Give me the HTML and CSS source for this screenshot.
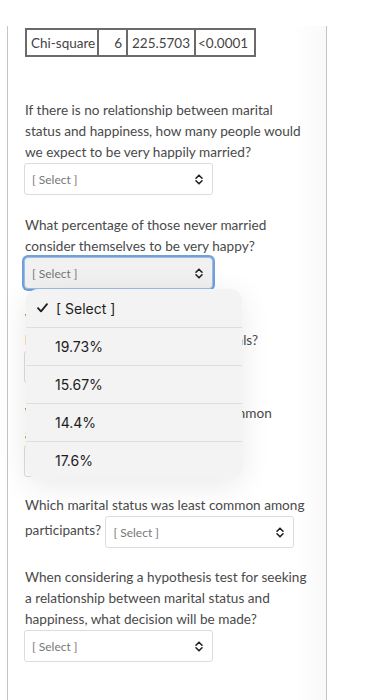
FILE: index.html
```html
<!DOCTYPE html>
<html lang="en">
<head>
    <meta charset="UTF-8">
    <meta name="viewport" content="width=device-width, initial-scale=1.0">
    <title>Chi-square quiz</title>
    <link rel="stylesheet" href="styles.css">
</head>
<body>

<div class="card">
    <!-- Resultado de la prueba -->
    <table class="stats">
        <tr>
            <td class="c-name">Chi-square</td>
            <td class="c-df num">6</td>
            <td class="c-val num">225.5703</td>
            <td class="c-p">&lt;0.0001</td>
        </tr>
    </table>

    <div class="question first">
        <p>If there is no relationship between marital status and happiness, how many people would we expect to be very happily married?</p>
        <div class="select"><span>[ Select ]</span><svg class="chev" width="8" height="11" viewBox="0 0 8 11"><polyline points="1,4.2 4,1.2 7,4.2"/><polyline points="1,6.8 4,9.8 7,6.8"/></svg></div>
    </div>

    <div class="question">
        <p>What percentage of those never married consider themselves to be very happy?</p>
        <div class="select-wrap">
            <div class="select focused"><span>[ Select ]</span><svg class="chev" width="8" height="11" viewBox="0 0 8 11"><polyline points="1,4.2 4,1.2 7,4.2"/><polyline points="1,6.8 4,9.8 7,6.8"/></svg></div>

            <!-- Lista abierta -->
            <ul class="menu">
                <li class="picked"><svg class="check" width="11" height="10" viewBox="0 0 11 10"><polyline points="1,5.2 4,8.4 10,1.2"/></svg>[ Select ]</li>
                <li>19.73%</li>
                <li>15.67%</li>
                <li>14.4%</li>
                <li>17.6%</li>
            </ul>
        </div>
    </div>

    <div class="question">
        <p>What is the expected count of those<br>happy among the widowed individuals?</p>
        <div class="select"><span>[ Select ]</span><svg class="chev" width="8" height="11" viewBox="0 0 8 11"><polyline points="1,4.2 4,1.2 7,4.2"/><polyline points="1,6.8 4,9.8 7,6.8"/></svg></div>
    </div>

    <div class="question">
        <p>Which marital status is the most common<br>among the very happy?</p>
        <div class="select"><span>[ Select ]</span><svg class="chev" width="8" height="11" viewBox="0 0 8 11"><polyline points="1,4.2 4,1.2 7,4.2"/><polyline points="1,6.8 4,9.8 7,6.8"/></svg></div>
    </div>

    <div class="question tight">
        <p>Which marital status was least common among participants? <span class="select inline"><span>[ Select ]</span><svg class="chev" width="8" height="11" viewBox="0 0 8 11"><polyline points="1,4.2 4,1.2 7,4.2"/><polyline points="1,6.8 4,9.8 7,6.8"/></svg></span></p>
    </div>

    <div class="question last">
        <p>When considering a hypothesis test for seeking a relationship between marital status and happiness, what decision will be made?</p>
        <div class="select"><span>[ Select ]</span><svg class="chev" width="8" height="11" viewBox="0 0 8 11"><polyline points="1,4.2 4,1.2 7,4.2"/><polyline points="1,6.8 4,9.8 7,6.8"/></svg></div>
    </div>
</div>

</body>
</html>
```

FILE: styles.css
```css
body, html {
    margin: 0;
    background-color: #fff;
    font-family: Lato, 'Liberation Sans', sans-serif;
}

/* Tarjeta con bordes laterales */
.card {
    margin: 26px 0 0 7px;
    width: 287px;
    min-height: 700px;
    padding: 2px 14px 0 17px;
    border-left: 1px solid #c4c4c4;
    border-right: 1px solid #c4c4c4;
    background: linear-gradient(to right, #fff 90%, #f9f9f9);
}

/* Tabla */
.stats {
    table-layout: fixed;
    width: 231px;
    border-collapse: separate;
    border-spacing: 0;
    border: 1px solid #6a6a6a;
    font-size: 13.5px;
    color: #444;
}

.stats td {
    box-sizing: border-box;
    border: 1px solid #6a6a6a;
    height: 27px;
    padding: 0 4px;
    white-space: nowrap;
}

.c-name { width: 72px; }
.c-df { width: 29px; }
.c-val { width: 68px; }
.stats .c-p { width: 60px; padding-left: 2px; }

.num {
    text-align: right;
}

/* Preguntas */
.question {
    margin-top: 20px;
}

.question.first {
    margin-top: 43px;
}

.question.tight {
    margin-top: 18px;
}

.question.last {
    margin-top: 19px;
}

.question p {
    margin: 0;
    font-size: 13.6px;
    line-height: 21px;
    color: #4a4a4a;
}

.select {
    display: flex;
    align-items: center;
    justify-content: space-between;
    box-sizing: border-box;
    width: 189px;
    height: 32px;
    margin-left: -1px;
    padding: 0 9px 0 7px;
    border: 1px solid #dcdcdc;
    border-radius: 3px;
    background-color: #fff;
    font-size: 12px;
    line-height: normal;
    color: #777;
}

.select.inline {
    display: inline-flex;
    vertical-align: middle;
    margin: 0 0 0 1px;
}

.select.focused {
    background-color: #f1f1f1;
    border-color: #9dbde2;
    border-radius: 4px;
    box-shadow: 0 0 0 2px #71a1d8;
}

.chev polyline {
    fill: none;
    stroke: #222;
    stroke-width: 1.6;
    stroke-linecap: round;
    stroke-linejoin: round;
}

/* Menú desplegable */
.select-wrap {
    position: relative;
}

.menu {
    position: absolute;
    top: 32px;
    left: 1px;
    z-index: 5;
    width: 216px;
    margin: 0;
    padding: 0;
    list-style: none;
    border-radius: 12px;
    background-color: #f3f3f3;
    box-shadow: 0 6px 30px rgba(0, 0, 0, 0.09);
    font-family: Inter, 'Noto Sans', sans-serif;
    font-size: 14px;
    color: #1d1d1d;
}

.menu li {
    display: flex;
    align-items: center;
    box-sizing: border-box;
    height: 38px;
    padding-left: 29px;
}

.menu li + li {
    border-top: 1px solid #dedede;
}

.menu li.picked {
    padding-left: 11px;
}

.check {
    margin-right: 8px;
}

.check polyline {
    fill: none;
    stroke: #1d1d1d;
    stroke-width: 1.8;
    stroke-linecap: round;
    stroke-linejoin: round;
}
```
